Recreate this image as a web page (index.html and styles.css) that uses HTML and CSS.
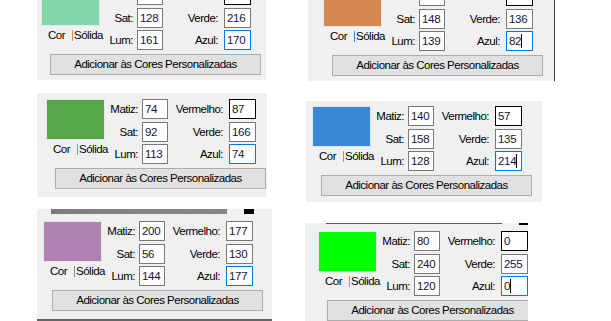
FILE: index.html
```html
<!DOCTYPE html>
<html lang="pt">
<head>
<meta charset="utf-8">
<title>Cores</title>
<link rel="stylesheet" href="styles.css">
</head>
<body>
<div class="col col-left">
  <section class="panel p1">
    <div class="dlg">
      <div class="top">
        <div class="swcell"><div class="swatch sw-mint"></div><div class="swcap">Cor<span class="bar"></span>Sólida</div></div>
        <div class="lbl">Matiz:</div><div class="fld">98</div><div class="lbl lbl-r">Vermelho:</div><div class="fld fld-red">130</div>
        <div class="lbl">Sat:</div><div class="fld">128</div><div class="lbl lbl-r">Verde:</div><div class="fld">216</div>
        <div class="lbl">Lum:</div><div class="fld">161</div><div class="lbl lbl-r">Azul:</div><div class="fld fld-blue">170</div>
      </div>
      <div class="btn">Adicionar às Cores Personalizadas</div>
    </div>
  </section>
  <section class="panel p3">
    <div class="dlg">
      <div class="top">
        <div class="swcell"><div class="swatch sw-green"></div><div class="swcap">Cor<span class="bar"></span>Sólida</div></div>
        <div class="lbl">Matiz:</div><div class="fld">74</div><div class="lbl lbl-r">Vermelho:</div><div class="fld fld-red">87</div>
        <div class="lbl">Sat:</div><div class="fld">92</div><div class="lbl lbl-r">Verde:</div><div class="fld">166</div>
        <div class="lbl">Lum:</div><div class="fld">113</div><div class="lbl lbl-r">Azul:</div><div class="fld fld-blue">74</div>
      </div>
      <div class="btn">Adicionar às Cores Personalizadas</div>
    </div>
  </section>
  <section class="panel p5">
    <div class="lumbar"><div class="grad"></div><div class="arrow"></div></div>
    <div class="dlg">
      <div class="top">
        <div class="swcell"><div class="swatch sw-purple"></div><div class="swcap">Cor<span class="bar bar-grey"></span>Sólida</div></div>
        <div class="lbl">Matiz:</div><div class="fld">200</div><div class="lbl lbl-r">Vermelho:</div><div class="fld">177</div>
        <div class="lbl">Sat:</div><div class="fld">56</div><div class="lbl lbl-r">Verde:</div><div class="fld">130</div>
        <div class="lbl">Lum:</div><div class="fld">144</div><div class="lbl lbl-r">Azul:</div><div class="fld fld-blue">177</div>
      </div>
      <div class="btn">Adicionar às Cores Personalizadas</div>
    </div>
  </section>
</div>
<div class="col col-right">
  <section class="panel p2">
    <div class="dlg">
      <div class="top">
        <div class="swcell"><div class="swatch sw-orange"></div><div class="swcap">Cor<span class="bar bar-blue"></span>Sólida</div></div>
        <div class="lbl">Matiz:</div><div class="fld">17</div><div class="lbl lbl-r">Vermelho:</div><div class="fld fld-red">212</div>
        <div class="lbl">Sat:</div><div class="fld">148</div><div class="lbl lbl-r">Verde:</div><div class="fld">136</div>
        <div class="lbl">Lum:</div><div class="fld">139</div><div class="lbl lbl-r">Azul:</div><div class="fld fld-blue">82<span class="caret"></span></div>
      </div>
      <div class="btn">Adicionar às Cores Personalizadas</div>
    </div>
  </section>
  <section class="panel p4">
    <div class="dlg">
      <div class="top">
        <div class="swcell"><div class="swatch sw-blue"></div><div class="swcap">Cor<span class="bar"></span>Sólida</div></div>
        <div class="lbl">Matiz:</div><div class="fld">140</div><div class="lbl lbl-r">Vermelho:</div><div class="fld fld-red">57</div>
        <div class="lbl">Sat:</div><div class="fld">158</div><div class="lbl lbl-r">Verde:</div><div class="fld">135</div>
        <div class="lbl">Lum:</div><div class="fld">128</div><div class="lbl lbl-r">Azul:</div><div class="fld fld-blue">214<span class="caret"></span></div>
      </div>
      <div class="btn">Adicionar às Cores Personalizadas</div>
    </div>
  </section>
  <section class="panel p6">
    <div class="edge"><div class="edge-line"></div><div class="edge-mark"></div></div>
    <div class="dlg">
      <div class="top">
        <div class="swcell"><div class="swatch sw-lime"></div><div class="swcap">Cor<span class="bar"></span>Sólida</div></div>
        <div class="lbl">Matiz:</div><div class="fld">80</div><div class="lbl lbl-r">Vermelho:</div><div class="fld fld-red">0</div>
        <div class="lbl">Sat:</div><div class="fld">240</div><div class="lbl lbl-r">Verde:</div><div class="fld">255</div>
        <div class="lbl">Lum:</div><div class="fld">120</div><div class="lbl lbl-r">Azul:</div><div class="fld fld-blue">0<span class="caret"></span></div>
      </div>
      <div class="btn">Adicionar às Cores Personalizadas</div>
    </div>
  </section>
</div>
</body>
</html>
```
FILE: styles.css
```css
html, body {
  margin: 0;
  padding: 0;
  background: #ffffff;
}
body {
  width: 611px;
  height: 321px;
  overflow: hidden;
  display: flex;
  font-family: "Liberation Sans", Arial, sans-serif;
  font-size: 11.5px;
  color: #000;
}
.col {
  display: flex;
  flex-direction: column;
  align-items: flex-start;
}
.col-left {
  width: 305px;
  padding-left: 37px;
  box-sizing: border-box;
  flex: none;
}
.col-right {
  flex: none;
}
.panel {
  background: #f0f0f0;
  overflow: hidden;
  flex: none;
  box-sizing: border-box;
}
/* panel placement */
.p1 { width: 229px; height: 80px; padding-left: 4px; }
.p1 .dlg { margin-top: -15px; }
.p3 { width: 230px; height: 104px; margin-top: 13px; padding: 6px 0 0 9px; }
.p5 { width: 235px; height: 112px; margin-top: 12px; padding-left: 6px; border-bottom: 2px solid #646464; }
.p5 .dlg { margin-top: 7px; }
.p2 { width: 247px; height: 81px; margin-left: 3px; padding-left: 15px; border-right: 1px solid #3a3a3a; }
.p2 .dlg { margin-top: -14px; }
.p4 { width: 236px; height: 101px; margin-left: 1px; margin-top: 20px; padding: 5px 0 0 6px; }
.p6 { width: 223px; height: 98px; margin-top: 21px; padding-left: 13px; }
.p6 .dlg { margin-top: 6px; }

.lumbar {
  display: flex;
  gap: 17px;
  height: 5px;
  margin-left: 8px;
}
.grad {
  width: 176px;
  height: 5px;
  background: linear-gradient(90deg, #787c78, #848585 50%, #8c8284);
}
.arrow {
  width: 10px;
  height: 5px;
  background: #000;
}
.edge {
  display: flex;
  height: 2px;
  margin-left: 8px;
}
.edge-line {
  width: 176px;
  height: 1px;
  background: #5a5a5a;
  flex: none;
}
.edge-mark {
  width: 12px;
  height: 2px;
  margin-left: 17px;
  background: #000;
  flex: none;
}

/* dialog block */
.dlg {
  width: 220px;
  display: flex;
  flex-direction: column;
}
.top {
  display: grid;
  grid-template-columns: 59px 37px 26px 61px 27px;
  grid-template-rows: 20px 20px 20px;
  row-gap: 2.5px;
}
.swcell {
  grid-column: 1;
  grid-row: 1 / span 3;
  display: flex;
  flex-direction: column;
}
.swatch {
  width: 59px;
  height: 41px;
  box-sizing: border-box;
  border: 1px solid #e6e6e6;
}
.sw-mint { background: #82d8aa; }
.sw-orange { background: #d48852; }
.sw-green { background: #57a64a; }
.sw-blue { background: #3987d6; }
.sw-purple { background: #b182b1; }
.sw-lime { background: #00ff00; }
.swcap {
  margin-top: 3px;
  padding-left: 7px;
  line-height: 12px;
  height: 12px;
  letter-spacing: -0.5px;
  white-space: nowrap;
}
.bar {
  display: inline-block;
  width: 1px;
  height: 11px;
  vertical-align: -2px;
  margin: 0 1px 0 7px;
  background: #e3893a;
}
.bar-blue { background: #3b7fd0; }
.bar-grey { background: #8c8c8c; }
.lbl {
  line-height: 20px;
  text-align: right;
  padding-right: 4px;
  white-space: nowrap;
  letter-spacing: -0.5px;
}
.lbl-r { padding-right: 6px; }
.fld {
  box-sizing: border-box;
  height: 20px;
  background: #fff;
  border: 1px solid #7a7a7a;
  padding-left: 2px;
  line-height: 18px;
  color: #16143a;
  letter-spacing: -0.3px;
  white-space: nowrap;
}
.fld-red { border-color: #000; }
.fld-blue { border-color: #0078d7; }
.caret {
  display: inline-block;
  width: 1px;
  height: 14px;
  background: #000;
  vertical-align: -3px;
}
.btn {
  margin-top: 4px;
  margin-left: 9px;
  width: 211px;
  height: 21px;
  box-sizing: border-box;
  background: #e1e1e1;
  border: 1px solid #adadad;
  text-align: center;
  line-height: 19px;
  letter-spacing: -0.5px;
  white-space: nowrap;
}
```
